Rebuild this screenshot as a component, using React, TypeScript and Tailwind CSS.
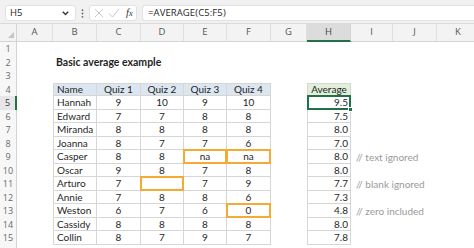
import React from "react";

const COLS = ["A", "B", "C", "D", "E", "F", "G", "H", "I", "J", "K"];

const names = ["Hannah", "Edward", "Miranda", "Joanna", "Casper", "Oscar", "Arturo", "Annie", "Weston", "Cassidy", "Collin"];
const q1 = ["9", "7", "8", "8", "8", "9", "7", "7", "6", "8", "8"];
const q2 = ["10", "7", "8", "7", "8", "8", "", "8", "7", "8", "7"];
const q3 = ["9", "8", "8", "7", "na", "7", "7", "8", "6", "8", "9"];
const q4 = ["10", "8", "8", "6", "na", "8", "9", "6", "0", "8", "7"];
const avg = ["9.5", "7.5", "8.0", "7.0", "8.0", "8.0", "7.7", "7.3", "4.8", "8.0", "7.8"];
const comments: Record<number, string> = { 9: "// text ignored", 11: "// blank ignored", 13: "// zero included" };

const orange: Record<string, boolean> = { "E9": true, "F9": true, "D11": true, "F13": true };

function Cell({ row, col }: { row: number; col: number }) {
  const letter = COLS[col];
  const key = letter + row;
  let content: React.ReactNode = null;
  let cls = "relative flex items-center text-[10px] text-[#1f1f1f] leading-none";
  const inTable = row >= 4 && row <= 15 && col >= 1 && col <= 5;
  const inAvg = row >= 4 && row <= 15 && col === 7;

  if (row === 2 && col === 1) {
    content = <span className="pl-[3px] whitespace-nowrap font-bold text-[10.5px]">Basic average example</span>;
  }
  if (inTable) {
    cls += " border-r border-b border-[#d6d6d6]";
    if (col === 1) cls += " border-l";
    if (row === 4) cls += " border-t bg-[#dce6f1]";
    if (row === 4) {
      content = col === 1 ? "Name" : "Quiz " + (col - 1);
      cls += col === 1 ? " justify-start pl-[3px]" : " justify-center";
    } else {
      const i = row - 5;
      if (col === 1) {
        content = names[i];
        cls += " justify-start pl-[3px]";
      } else {
        content = [q1, q2, q3, q4][col - 2][i];
        cls += " justify-center";
      }
    }
  }
  if (inAvg) {
    cls += " border-r border-b border-l border-[#d6d6d6]";
    if (row === 4) {
      cls += " border-t bg-[#e2efda] justify-center";
      content = "Average";
    } else {
      cls += " justify-end pr-[2px]";
      content = avg[row - 5];
    }
  }
  if (col === 8 && comments[row]) {
    content = <span className="pl-[5px] whitespace-nowrap text-[#9a9a9a]">{comments[row]}</span>;
  }

  return (
    <div className={cls}>
      {content}
      {orange[key] && (
        <div className="absolute inset-[-1px] border-2 border-[#f5aa33] pointer-events-none" />
      )}
      {row === 5 && col === 7 && (
        <div className="absolute inset-[-1px] border-2 border-[#217346] pointer-events-none z-10">
          <div className="absolute right-[-4px] bottom-[-4px] w-[5px] h-[5px] bg-[#217346] border border-white" />
        </div>
      )}
    </div>
  );
}

export default function App() {
  const rows = Array.from({ length: 16 }, (_, i) => i + 1);
  return (
    <div className="w-[474px] h-[248px] overflow-hidden bg-white flex flex-col font-['Lato',sans-serif]">
      {/* formula bar */}
      <div className="h-[23px] shrink-0 bg-[#f1f1f1] flex items-start pt-[5px] font-['Open_Sans',sans-serif]">
        <div className="ml-[5px] w-[71px] h-[16px] bg-white rounded-[3px] border border-[#e2e2e2] flex items-center pl-[4px] pr-[5px] justify-between">
          <span className="text-[9.5px] text-[#262626]">H5</span>
          <svg width="7" height="5" viewBox="0 0 7 5" className="mr-[1px]">
            <path d="M0.8 0.8 L3.5 3.6 L6.2 0.8" fill="none" stroke="#333" strokeWidth="1.4" />
          </svg>
        </div>
        <div className="w-[13px] h-[16px] flex items-center justify-center">
          <svg width="3" height="9" viewBox="0 0 3 9">
            <circle cx="1.5" cy="1.2" r="0.9" fill="#666" />
            <circle cx="1.5" cy="4.5" r="0.9" fill="#666" />
            <circle cx="1.5" cy="7.8" r="0.9" fill="#666" />
          </svg>
        </div>
        <div className="w-[48px] h-[16px] bg-white rounded-[3px] border border-[#e2e2e2] flex items-center pl-[4px]">
          <svg width="10" height="10" viewBox="0 0 10 10">
            <path d="M1 1 L9 9 M9 1 L1 9" stroke="#c8c8c8" strokeWidth="1" />
          </svg>
          <svg width="12" height="10" viewBox="0 0 12 10" className="ml-[4px]">
            <path d="M1 5.5 L4.5 9 L11 1" fill="none" stroke="#c8c8c8" strokeWidth="1" />
          </svg>
          <span className="ml-[6px] font-['Liberation_Serif',serif] italic text-[10.5px] text-[#333] leading-none">
            f<span className="text-[8.5px]">x</span>
          </span>
        </div>
        <div className="ml-[5px] flex-1 h-[16px] bg-white rounded-l-[3px] border border-r-0 border-[#e2e2e2] flex items-center pl-[5px]">
          <span className="text-[9.5px] text-[#1f1f1f] tracking-[0.1px]">=AVERAGE(C5:F5)</span>
        </div>
      </div>

      {/* sheet grid */}
      <div className="grid grid-cols-[17px_36px_44px_44px_43px_43px_44px_36px_44px_42px_44px_43px] grid-rows-[18px_repeat(16,13.5px)] border-t border-[#dadada]">
        {/* corner */}
        <div className="bg-[#f3f3f3] border-r border-b border-[#d4d4d4] flex items-end justify-end pr-[2px] pb-[3px]">
          <svg width="6" height="6" viewBox="0 0 6 6">
            <path d="M6 0 L6 6 L0 6 Z" fill="#c4c4c4" />
          </svg>
        </div>
        {COLS.map((c) => (
          <div
            key={c}
            className={
              c === "H"
                ? "bg-[#dcdcdc] border-b-2 border-b-[#217346] border-r border-r-[#d4d4d4] flex items-center justify-center text-[9.5px] text-[#444] font-['Open_Sans',sans-serif]"
                : "bg-[#f3f3f3] border-b border-b-[#d4d4d4] border-r border-r-[#e0e0e0] flex items-center justify-center text-[9.5px] text-[#555] font-['Open_Sans',sans-serif]"
            }
          >
            {c}
          </div>
        ))}
        {rows.map((r) => (
          <React.Fragment key={r}>
            <div
              className={
                r === 5
                  ? "bg-[#e6e6e6] border-r-2 border-[#217346] flex items-center justify-center text-[9px] text-[#3a3a3a] font-['Open_Sans',sans-serif]"
                  : "bg-[#f7f7f7] border-r border-[#d4d4d4] flex items-center justify-center text-[9px] text-[#6a6a6a] font-['Open_Sans',sans-serif]"
              }
            >
              {r <= 15 ? r : null}
            </div>
            {COLS.map((c, ci) => (
              <Cell key={c + r} row={r} col={ci} />
            ))}
          </React.Fragment>
        ))}
      </div>
    </div>
  );
}
